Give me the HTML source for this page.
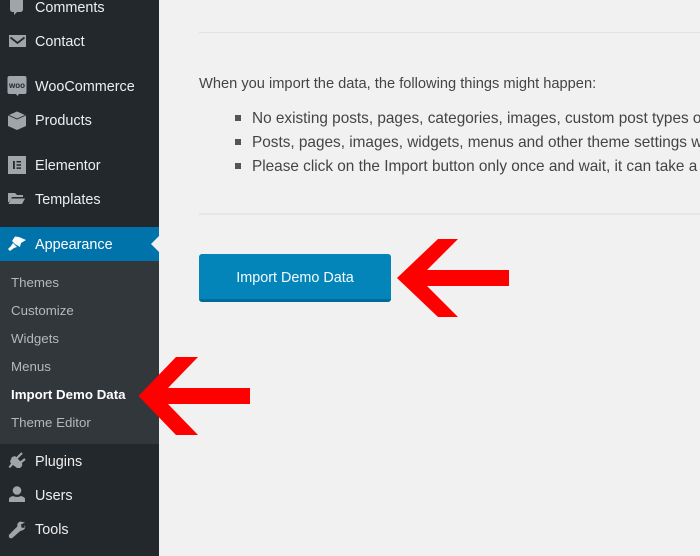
<!DOCTYPE html>
<html><head><meta charset="utf-8">
<style>
html,body{margin:0;padding:0}
body{width:700px;height:556px;overflow:hidden;background:#f1f1f1;position:relative;font-family:"Liberation Sans",sans-serif}
.a{position:absolute;white-space:nowrap}
#side{position:absolute;left:0;top:0;width:159px;height:556px;overflow:hidden;background:#23282d}
#main{position:absolute;left:159px;top:0;width:541px;height:556px;overflow:hidden}
.m{position:absolute;left:35px;font-size:14.4px;line-height:18px;color:#eee;white-space:nowrap}
.s{position:absolute;left:11px;font-size:13.3px;line-height:16px;color:#b4b9be;white-space:nowrap}
.t{position:absolute;font-size:15.35px;line-height:18px;color:#444;white-space:nowrap}
svg{position:absolute;left:0;top:0}
</style></head><body>
<div id="side">
<div class="a" style="left:0;top:227px;width:159px;height:34px;background:#0073aa"></div>
<div class="a" style="left:0;top:261px;width:159px;height:183px;background:#32373c"></div>
<div class="m" style="top:-1px">Comments</div>
<div class="m" style="top:33px">Contact</div>
<div class="m" style="top:78px">WooCommerce</div>
<div class="m" style="top:112px">Products</div>
<div class="m" style="top:157px">Elementor</div>
<div class="m" style="top:191px">Templates</div>
<div class="m" style="top:236px;color:#fff">Appearance</div>
<div class="s" style="top:275px">Themes</div>
<div class="s" style="top:303px">Customize</div>
<div class="s" style="top:331px">Widgets</div>
<div class="s" style="top:359px">Menus</div>
<div class="s" style="top:387px;color:#fff;font-weight:bold">Import Demo Data</div>
<div class="s" style="top:415px">Theme Editor</div>
<div class="m" style="top:453px">Plugins</div>
<div class="m" style="top:487px">Users</div>
<div class="m" style="top:521px">Tools</div>
</div>
<div id="main">
<div class="a" style="left:40px;top:32px;width:501px;height:1px;background:#e1e1e1"></div>
<div class="a" style="left:40px;top:213px;width:501px;height:2px;background:#e6e6e6"></div>
<div class="t" style="left:40px;top:75px;font-size:14.65px">When you import the data, the following things might happen:</div>
<div class="a" style="left:76px;top:115px;width:6px;height:6px;background:#555"></div>
<div class="a" style="left:76px;top:139px;width:6px;height:6px;background:#555"></div>
<div class="a" style="left:76px;top:163px;width:6px;height:6px;background:#555"></div>
<div class="t" style="left:93px;top:110px">No existing posts, pages, categories, images, custom post types or any other data will be deleted</div>
<div class="t" style="left:93px;top:134px">Posts, pages, images, widgets, menus and other theme settings will get imported</div>
<div class="t" style="left:93px;top:158px">Please click on the Import button only once and wait, it can take a couple of minutes</div>
<div class="a" style="left:40px;top:254px;width:192px;height:45px;background:#0385ba;border-bottom:3px solid #006a9b;border-radius:3px"></div>
<div class="a" style="left:40px;top:269px;width:192px;text-align:center;font-size:14.4px;line-height:18px;color:#f4fbff">Import Demo Data</div>
</div>
<svg width="700" height="556" viewBox="0 0 700 556">
<g fill="#a0a5aa">
<path d="M10 0h13v9q0 3-3 3h-3l-3 3v-3h-1q-3 0-3-3z"/>
<rect x="9" y="35" width="17" height="12"/>
<rect x="7.500" y="76" width="19" height="18" rx="2"/>
<path d="M16 94h3l-1.500 2z"/>
<path d="M17 111l9 4v11l-9 4-9-4v-11z"/>
<rect x="8" y="156" width="18" height="18"/>
<path d="M8 193h7l2 2h6v2H12l-3 5-1 0z"/>
<path d="M11 198.500h14l-3 5.500H8.500z"/>
<path d="M12 457l3-1 7 7q1 3-2 5l-3 0-4-3-3 3-1.500-1 2.500-3.500-1-2z"/>
<circle cx="17" cy="490.500" r="4.300"/>
<path d="M9 502v-3q0-2 4-3 4 2 8 0 4 1 4 3v3z"/>
<path d="M25 522.500l-4 2 .5 3 3 .5 0-3 .8 2q-.3 3-5 4l-8 7q-2 1-3-.5t0-3l8-8q-.5-4 3-5z"/>
</g>
<path d="M16 459l6-6M20 463l5-4" stroke="#a0a5aa" stroke-width="2.200" fill="none"/>
<path d="M10.500 37.500l7 5.500 7-5.500" fill="none" stroke="#23282d" stroke-width="1.800"/>
<path d="M8 115l9-4 9 4-9 4z" fill="#a0a5aa" stroke="#23282d" stroke-width=".9"/>
<path d="M13 161h1.800v8H13zM16.500 161h4.500v1.500h-4.500zM16.500 164.200h4.500v1.500h-4.500zM16.500 167.400h4.500v1.500h-4.500z" fill="#23282d"/>
<text x="17" y="88" font-family="Liberation Sans" font-size="8" font-weight="bold" text-anchor="middle" fill="#23282d">woo</text>
<g fill="#fff">
<path d="M15 236.500l4 .5 7 3-5 3-1 4-5-3-3-3z"/>
<path d="M13 243l4 4-3 1-4 3-2-2 3-3z"/>
</g>
<path d="M159 236l-8 8 8 8z" fill="#f1f1f1"/>
<path fill="#f00" d="M138.500 396L176 357h22l-30 31h82v16h-82l30 31h-22z"/>
<path fill="#f00" d="M397 278L438 239h20l-31 31h82v16h-82l31 31h-20z"/>
</svg>
</body></html>
